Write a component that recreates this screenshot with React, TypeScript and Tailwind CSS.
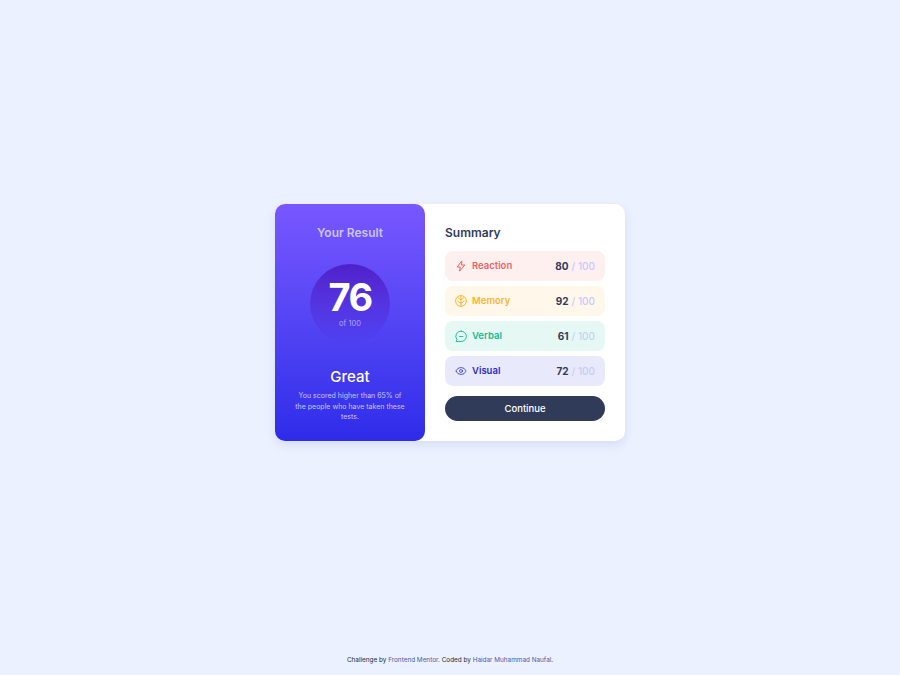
import { Eye } from "lucide-react";
import type { ReactNode } from "react";

function BoltIcon() {
  return (
    <svg width="12" height="12" viewBox="0 0 12 12" fill="none" stroke="currentColor" strokeWidth="1" strokeLinejoin="round">
      <path d="M6.8.9 2.2 7h3l-.6 4.1L9.8 5H6.6L6.8.9Z" />
    </svg>
  );
}

function BrainIcon() {
  return (
    <svg width="12" height="12" viewBox="0 0 12 12" fill="none" stroke="currentColor" strokeWidth="1" strokeLinecap="round">
      <circle cx="6" cy="6" r="5.4" />
      <path d="M6 1v10" />
      <path d="M6 4.4C4.8 4.6 3.8 3.9 3.7 2.8M6 8C4.6 8 3.4 7.2 3 5.8M9 5.8C8.6 7.2 7.4 8 6 8M8.3 2.8C8.2 3.9 7.2 4.6 6 4.4" />
    </svg>
  );
}

function ChatIcon() {
  return (
    <svg width="13" height="13" viewBox="0 0 13 13" fill="none" stroke="currentColor" strokeWidth="1" strokeLinecap="round" strokeLinejoin="round">
      <path d="M6.7.7a5.6 5.6 0 1 1 0 11.2H1.2l1-2A5.6 5.6 0 0 1 6.7.7Z" />
      <path d="M4.9 6.5h3.6" />
    </svg>
  );
}

interface RowProps {
  icon: ReactNode;
  label: string;
  score: number;
  bg: string;
  text: string;
  slash: string;
}

function Row({ icon, label, score, bg, text, slash }: RowProps) {
  return (
    <div className={`flex h-[30px] items-center justify-between rounded-lg px-[10px] ${bg}`}>
      <div className={`flex items-center gap-[5px] text-[9.5px] font-semibold ${text}`}>
        <span className="flex w-[12px] justify-center">{icon}</span>
        <span className="pt-[1px]">{label}</span>
      </div>
      <div className="text-[10px] font-bold">
        <span className="text-[#303b5a]">{score}</span>
        <span className={`ml-[3px] font-medium ${slash}`}>/ 100</span>
      </div>
    </div>
  );
}

export default function App() {
  return (
    <div className="flex h-[675px] flex-col bg-[#ebf1ff] font-['Inter',sans-serif]">
      <main className="flex flex-1 items-center justify-center">
        <div className="flex h-[237px] w-[350px] rounded-[10px] bg-white shadow-[0_4px_10px_rgba(120,135,190,0.18)]">
          <section className="flex w-[150px] flex-col items-center rounded-[10px] bg-gradient-to-b from-[#7857ff] to-[#2e2be9] px-[20px] pt-[20px] text-center">
            <h2 className="text-[12px] font-semibold leading-[18px] text-[#c8c7ff]">Your Result</h2>
            <div className="mt-[22px] flex h-[80px] w-[80px] flex-col items-center justify-center rounded-full bg-gradient-to-b from-[#4e21ca] to-[#2421ca00]">
              <span className="text-[38px] font-bold leading-[34px] tracking-[-1.5px] text-white">76</span>
              <span className="mt-[5px] text-[7.5px] leading-[10px] text-[#c8c7ff]/80">of 100</span>
            </div>
            <h3 className="mt-[21px] text-[15px] font-medium leading-[24px] text-white">Great</h3>
            <p className="-mx-[2px] mt-[2px] text-[7px] leading-[10.5px] text-[#c8c7ff]">
              You scored higher than 65% of the people who have taken these tests.
            </p>
          </section>
          <section className="flex flex-1 flex-col px-[20px] pt-[20px]">
            <h2 className="text-[12px] font-semibold leading-[18px] text-[#303b5a]">Summary</h2>
            <div className="mt-[9px] flex flex-col gap-[5px]">
              <Row icon={<BoltIcon />} label="Reaction" score={80} bg="bg-[#fff0f0]" text="text-[#f25f5f]" slash="text-[#c8c7ff]" />
              <Row icon={<BrainIcon />} label="Memory" score={92} bg="bg-[#fff8ea]" text="text-[#f9b52c]" slash="text-[#c8c7ff]" />
              <Row icon={<ChatIcon />} label="Verbal" score={61} bg="bg-[#e6f8f3]" text="text-[#14bb92]" slash="text-[#c5d3f0]" />
              <Row icon={<Eye size={12} strokeWidth={1.5} />} label="Visual" score={72} bg="bg-[#e9e9fc]" text="text-[#2e2bc4]" slash="text-[#c5cdf2]" />
            </div>
            <button className="mt-[10px] h-[25px] rounded-full bg-[#303b5a] pt-[1px] text-[9.5px] font-medium text-white">Continue</button>
          </section>
        </div>
      </main>
      <footer className="flex h-[30px] justify-center text-[6.4px] leading-[30px] text-[#1f2937]">
        <span>
          Challenge by <a className="text-[#4a5ca8]">Frontend Mentor</a>. Coded by <a className="text-[#4a5ca8]">Haidar Muhammad Naufal</a>.
        </span>
      </footer>
    </div>
  );
}
